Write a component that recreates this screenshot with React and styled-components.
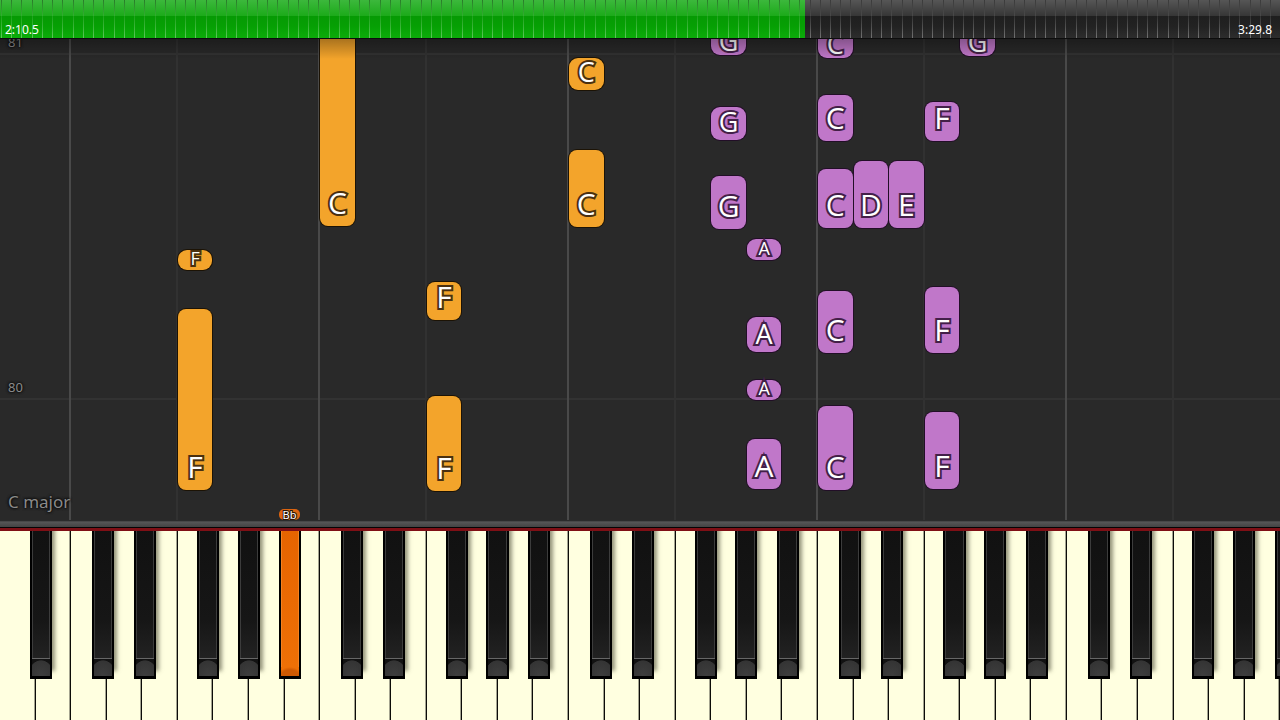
import React from 'react';
import styled, { createGlobalStyle } from 'styled-components';

const GlobalStyle = createGlobalStyle`
    * {
        box-sizing: border-box;
    }

    body {
        margin: 0;
        background-color: #292929;
        font-family: 'Noto Sans', 'Open Sans', sans-serif;
    }
`

const LANES = 36;
const LABELS = ['A', 'B', 'C', 'D', 'E', 'F', 'G'];

/* how far into its white key each sharp starts, in percent */
const SHARPS = { C: 59, D: 77, F: 53, G: 68, A: 84 };

const colors = {
    left: { fill: '#f3a42b', edge: '#1c1305', ink: '#4a3010' },
    right: { fill: '#c077c9', edge: '#220e27', ink: '#432048' },
};

const Page = styled.main`
    display: flex;
    flex-direction: column;
    min-height: 100vh;
`

const Timeline = styled.header`
    display: grid;
    grid-template-columns: 100%;
    height: 39px;
    border-bottom: 1px solid #0d0d0d;
    background-image: linear-gradient(#565656, #363636 42%, #1f1f1f 43%, #222 70%, #2d2d2d);
`

const Played = styled.div`
    grid-area: 1 / 1;
    background-image: linear-gradient(#3cb83c, #1caa1a 42%, #069a04 43%, #06a004 70%, #0cac0a);
`

const Ticks = styled.div`
    grid-area: 1 / 1;
    display: flex;
    padding-left: 1px;
`

const Tick = styled.span`
    flex: 1;
    border-left: 1px solid;
    border-image: linear-gradient(rgba(0, 0, 0, 0.35), rgba(255, 255, 255, 0.1) 45%, rgba(255, 255, 255, 0.34)) 1;
`

const Clocks = styled.div`
    grid-area: 1 / 1;
    display: flex;
    align-items: flex-end;
    justify-content: space-between;
    padding: 0 8px 0 5px;
    color: #fff;
    font-size: 12px;
    line-height: 16px;
`

const Roll = styled.section`
    position: relative;
    flex: 1;
    display: grid;
    grid-template-columns: 100%;
    min-height: 480px;
    overflow: hidden;

    &::after {
        content: '';
        grid-area: 1 / 1;
        z-index: 1;
        height: 20px;
        background-image: linear-gradient(rgba(0, 0, 0, 0.3), transparent);
    }
`

const Lanes = styled.div`
    grid-area: 1 / 1;
    display: flex;
`

const lineColors = { B: '#494949', E: '#313131' };

const Lane = styled.div`
    position: relative;
    flex: 1;
    box-shadow: inset -2px 0 ${props => lineColors[props.$name] || 'transparent'};
`

const Measure = styled.div`
    position: absolute;
    top: ${props => props.$top}px;
    width: 100%;
    padding: 0 8px 3px;
    border-bottom: 2px solid #323232;
    color: #8a8a8a;
    font-size: 13px;
    line-height: 16px;
    text-shadow: 0 0 3px #000, 0 0 3px #000;
`

const KeyName = styled.p`
    grid-area: 1 / 1;
    align-self: end;
    z-index: 1;
    margin: 0;
    padding: 0 8px 6px;
    color: #8a8a8a;
    font-size: 17px;
    line-height: 24px;
    text-shadow: 0 0 3px #000, 0 0 3px #000;
`

const sizes = {
    small: { font: 18, gap: 3, radius: 9 },
    short: { font: 27, gap: 1, radius: 9 },
    medium: { font: 27, gap: 5, radius: 9 },
    large: { font: 30, gap: 8, radius: 8 },
};

const sizeOf = length => {
    if (length < 25) return sizes.small;
    if (length < 32) return sizes.short;
    return length < 36 ? sizes.medium : sizes.large;
};

const NoteBlock = styled.div`
    position: absolute;
    top: ${props => props.$top}px;
    width: calc(100% - 1px);
    height: ${props => props.$length}px;
    display: flex;
    align-items: flex-end;
    justify-content: center;
    padding-bottom: ${props => sizeOf(props.$length).gap}px;
    border-radius: ${props => sizeOf(props.$length).radius}px;
    background-color: ${props => colors[props.$hand].fill};
    box-shadow: 0 0 0 1px ${props => colors[props.$hand].edge};
    color: #fff;
    font-family: 'Open Sans', 'Noto Sans', sans-serif;
    font-size: ${props => sizeOf(props.$length).font}px;
    font-weight: 500;
    line-height: 1;
    -webkit-text-stroke: 4px ${props => colors[props.$hand].ink};
    paint-order: stroke fill;
`

const FlatNote = styled.div`
    position: absolute;
    z-index: 1;
    left: ${SHARPS.A}%;
    bottom: 0;
    width: 60%;
    height: 11px;
    border-radius: 5px;
    background-color: #dc6410;
    color: #fff;
    font-size: 11px;
    line-height: 11px;
    text-align: center;
    -webkit-text-stroke: 2px #2c1606;
    paint-order: stroke fill;
`

const Rail = styled.div`
    height: 11px;
    border-bottom: 3px solid #7f0f15;
    background-image: linear-gradient(#2b2b2b 1px, #3a3a3a 1px, #565656 2px, #444 7px, #050505 7px);
`

const Keyboard = styled.section`
    display: flex;
    height: 189px;
    overflow: hidden;
    background-color: #ffffe0;
`

const KeySlot = styled.div`
    position: relative;
    flex: 1;
`

const WhiteKey = styled.button`
    display: block;
    width: 100%;
    height: 100%;
    padding: 0;
    border: 0;
    border-right: 1px solid #0c0c08;
    background-color: #ffffe0;
    box-shadow: inset -1px 0 #a4a490;
`

const BlackKey = styled.button`
    position: absolute;
    z-index: 1;
    top: 0;
    left: ${props => props.$offset}%;
    width: 62%;
    height: 148px;
    display: flex;
    flex-direction: column;
    justify-content: flex-end;
    padding: 0 2px 3px;
    border: 0;
    background-color: #000;
    box-shadow: ${props => props.$pressed ? 'none' : '4px -7px 4px -1px rgba(60, 60, 40, 0.55)'};

    &::before {
        content: '';
        flex: 1;
        border: solid ${props => props.$pressed ? '#f58220' : '#3c3c3c'};
        border-width: 0 1px;
        background-image: ${props => props.$pressed
            ? 'linear-gradient(#e66400, #ee7006)'
            : 'linear-gradient(#111, #161616 70%, #222)'};
    }

    &::after {
        content: '';
        height: ${props => props.$pressed ? 9 : 17}px;
        border-top: ${props => props.$pressed ? '0' : '1px solid #666'};
        background-image: ${props => props.$pressed
            ? 'radial-gradient(ellipse 12px 9px at 50% 100%, #d05a02 70%, #ee7006)'
            : 'radial-gradient(ellipse 13px 16px at 50% 100%, #3e3e3e, #343434 95%, #121212)'};
    }
`

const song = {
    position: '2:10.5',
    length: '3:29.8',
    percent: 62.9,
    bars: 125,
    keyName: 'C major',
};

const measures = [
    { number: 81, top: -5 },
    { number: 80, top: 340 },
];

// lane is the white key below the note, top and length are in pixels of the roll
const notes = [
    { name: 'C', hand: 'left', lane: 9, top: -20, length: 207 },
    { name: 'C', hand: 'left', lane: 16, top: 19, length: 32 },
    { name: 'C', hand: 'left', lane: 16, top: 111, length: 77 },
    { name: 'F', hand: 'left', lane: 5, top: 211, length: 20 },
    { name: 'F', hand: 'left', lane: 5, top: 270, length: 181 },
    { name: 'F', hand: 'left', lane: 12, top: 243, length: 38 },
    { name: 'F', hand: 'left', lane: 12, top: 357, length: 95 },
    { name: 'G', hand: 'right', lane: 20, top: -14, length: 30 },
    { name: 'C', hand: 'right', lane: 23, top: -11, length: 30 },
    { name: 'G', hand: 'right', lane: 27, top: -13, length: 30 },
    { name: 'G', hand: 'right', lane: 20, top: 68, length: 33 },
    { name: 'C', hand: 'right', lane: 23, top: 56, length: 46 },
    { name: 'F', hand: 'right', lane: 26, top: 63, length: 39 },
    { name: 'G', hand: 'right', lane: 20, top: 137, length: 53 },
    { name: 'C', hand: 'right', lane: 23, top: 130, length: 59 },
    { name: 'D', hand: 'right', lane: 24, top: 122, length: 67 },
    { name: 'E', hand: 'right', lane: 25, top: 122, length: 67 },
    { name: 'A', hand: 'right', lane: 21, top: 200, length: 21 },
    { name: 'A', hand: 'right', lane: 21, top: 278, length: 35 },
    { name: 'C', hand: 'right', lane: 23, top: 252, length: 62 },
    { name: 'F', hand: 'right', lane: 26, top: 248, length: 66 },
    { name: 'A', hand: 'right', lane: 21, top: 341, length: 20 },
    { name: 'A', hand: 'right', lane: 21, top: 400, length: 50 },
    { name: 'C', hand: 'right', lane: 23, top: 367, length: 84 },
    { name: 'F', hand: 'right', lane: 26, top: 373, length: 77 },
];

const keys = Array.from({ length: LANES }, (_, i) => LABELS[i % 7]);
const PRESSED = 7;

const ProgressBar = () => (
    <Timeline>
        <Played style={{ width: `${song.percent}%` }} />
        <Ticks>
            {Array.from({ length: song.bars }, (_, i) => <Tick key={i} />)}
        </Ticks>
        <Clocks>
            <time>{song.position}</time>
            <time>{song.length}</time>
        </Clocks>
    </Timeline>
);

const PianoRoll = () => (
    <Roll>
        {measures.map(({ number, top }) => (
            <Measure key={number} $top={top}>{number}</Measure>
        ))}

        <Lanes>
            {keys.map((key, i) => (
                <Lane key={i} $name={key}>
                    {notes.filter(note => note.lane === i).map(({ name, hand, top, length }) => (
                        <NoteBlock key={top} $hand={hand} $top={top} $length={length}>
                            {name}
                        </NoteBlock>
                    ))}
                    {i === PRESSED && <FlatNote>Bb</FlatNote>}
                </Lane>
            ))}
        </Lanes>

        <KeyName>{song.keyName}</KeyName>
    </Roll>
);

const Piano = () => (
    <Keyboard>
        {keys.map((name, i) => (
            <KeySlot key={i}>
                <WhiteKey type="button" aria-label={name} />
                {SHARPS[name] && (
                    <BlackKey
                        type="button"
                        aria-label={`${name} sharp`}
                        $offset={SHARPS[name]}
                        $pressed={i === PRESSED}
                    />
                )}
            </KeySlot>
        ))}
    </Keyboard>
);

const App = () => (
    <Page>
        <GlobalStyle />
        <ProgressBar />
        <PianoRoll />
        <Rail />
        <Piano />
    </Page>
);

export default App;
